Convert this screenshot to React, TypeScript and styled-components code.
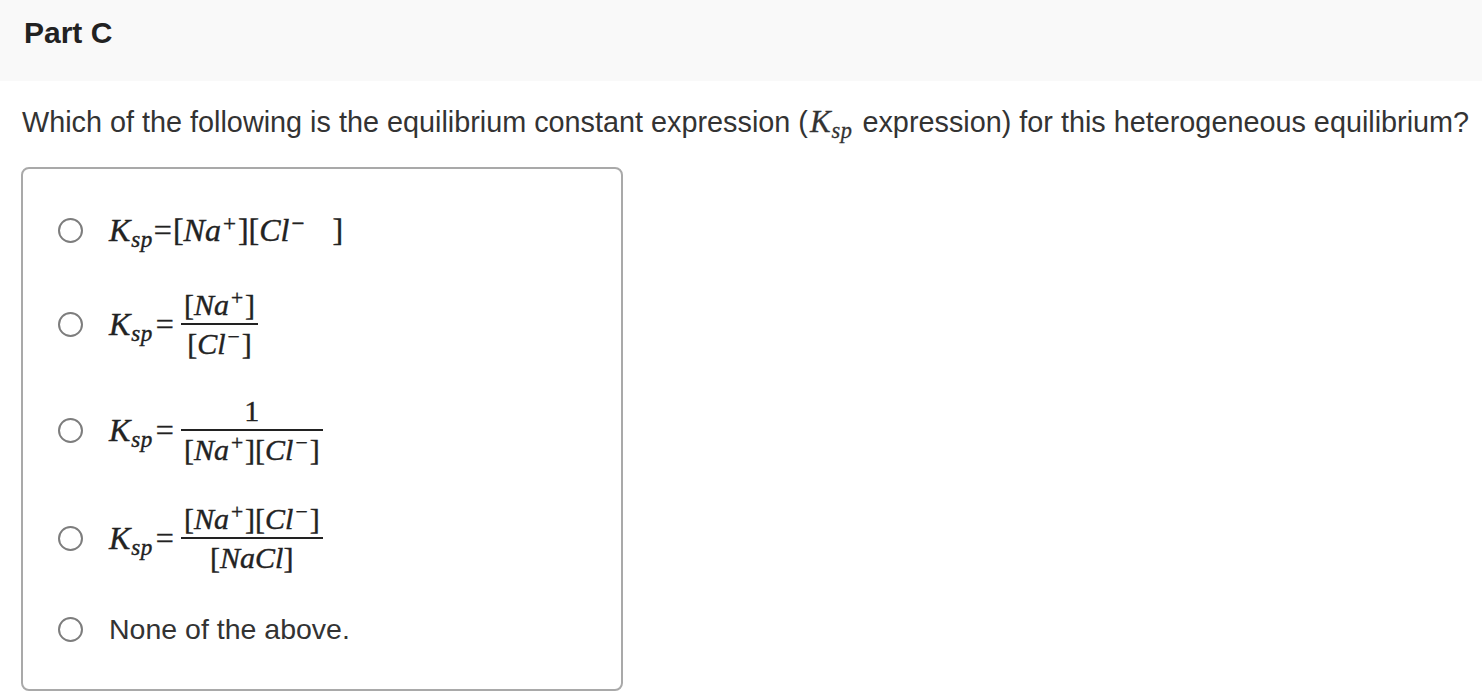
import styled, { createGlobalStyle } from 'styled-components';

const GlobalStyle = createGlobalStyle`
  body {
    margin: 0;
    background: #fff;
    font-family: "Liberation Sans", Arial, Helvetica, sans-serif;
    color: #333;
  }
`;

const Header = styled.div`
  height: 81px;
  box-sizing: border-box;
  background: #f9f9f9;
  padding: 14px 24px 0;

  h2 {
    margin: 0;
    font-size: 30px;
    line-height: 38px;
    font-weight: bold;
    color: #222;
  }
`;

const Question = styled.p`
  margin: 0;
  padding: 23px 22px 0;
  font-size: 28.8px;
  line-height: 36px;
  white-space: nowrap;
`;

const AnswerBox = styled.div`
  margin: 27px 0 0 21px;
  width: 602px;
  height: 524px;
  box-sizing: border-box;
  border: 2px solid #a9a9a9;
  border-radius: 8px;
  padding-top: 14px;
`;

const Option = styled.label<{ $h: number }>`
  display: flex;
  align-items: center;
  height: ${(p) => p.$h}px;
  padding-left: 35px;
  cursor: pointer;
`;

const Radio = styled.input.attrs({ type: 'radio', name: 'partc' })`
  appearance: none;
  margin: 0 26px 0 0;
  width: 25px;
  height: 25px;
  flex: none;
  box-sizing: border-box;
  border: 2px solid #7d7d7d;
  border-radius: 50%;
  background: #fff;
`;

const Text = styled.span`
  font-size: 28.5px;
  color: #333;
`;

const Math = styled.span`
  display: inline-flex;
  align-items: center;
  font-family: "Liberation Serif", "Times New Roman", serif;
  font-size: 32px;
  color: #222;
  white-space: nowrap;
  -webkit-text-stroke: 0.4px #222;
`;

const Run = styled.span`
  display: inline-block;
  line-height: 40px;
`;

const Mi = styled.i`
  font-style: italic;
`;

const Mo = styled.span<{ $space?: number }>`
  font-style: normal;
  margin: 0 ${(p) => p.$space ?? 0}px;
`;

const Sub = styled.sub`
  font-style: italic;
  font-size: 0.72em;
  vertical-align: -0.28em;
  line-height: 0;
  margin-left: 1px;
  letter-spacing: 0.5px;
`;

const Sup = styled.sup<{ $after?: number }>`
  font-size: 0.72em;
  vertical-align: 0.42em;
  line-height: 0;
  margin-left: 2px;
  margin-right: ${(p) => p.$after ?? 2}px;
`;

const Frac = styled.span`
  display: inline-flex;
  flex-direction: column;
  align-items: stretch;
  text-align: center;
  font-size: 30px;
  margin-left: 4px;
`;

const Num = styled.span`
  line-height: 36px;
  padding: 0 3px 0;
`;

const Den = styled.span`
  line-height: 36px;
  padding: 1px 3px 0;
  border-top: 2px solid #222;
`;

const InlineK = styled.span`
  font-family: "Liberation Serif", "Times New Roman", serif;
  font-style: italic;
  font-size: 31px;
  margin: 0 2px;
  -webkit-text-stroke: 0.3px #333;
`;

const Ksp = () => (
  <>
    <Mi>K</Mi>
    <Sub>sp</Sub>
  </>
);

const Na = () => (
  <>
    <Mo>[</Mo>
    <Mi>Na</Mi>
    <Sup>+</Sup>
    <Mo>]</Mo>
  </>
);

const Cl = ({ gap }: { gap?: number }) => (
  <>
    <Mo>[</Mo>
    <Mi>Cl</Mi>
    <Sup $after={gap}>−</Sup>
    <Mo>]</Mo>
  </>
);

const App = () => {
  return (
    <>
      <GlobalStyle />
      <Header>
        <h2>Part C</h2>
      </Header>
      <Question>
        Which of the following is the equilibrium constant expression (
        <InlineK>
          K<Sub>sp</Sub>
        </InlineK>{' '}
        expression) for this heterogeneous equilibrium?
      </Question>
      <AnswerBox>
        <Option $h={94}>
          <Radio />
          <Math>
            <Run>
              <Ksp />
              <Mo $space={1}>=</Mo>
              <Na />
              <Cl gap={28} />
            </Run>
          </Math>
        </Option>
        <Option $h={94}>
          <Radio />
          <Math>
            <Run>
              <Ksp />
              <Mo $space={3}>=</Mo>
            </Run>
            <Frac>
              <Num>
                <Na />
              </Num>
              <Den>
                <Cl />
              </Den>
            </Frac>
          </Math>
        </Option>
        <Option $h={118}>
          <Radio />
          <Math>
            <Run>
              <Ksp />
              <Mo $space={3}>=</Mo>
            </Run>
            <Frac>
              <Num>1</Num>
              <Den>
                <Na />
                <Cl />
              </Den>
            </Frac>
          </Math>
        </Option>
        <Option $h={98}>
          <Radio />
          <Math>
            <Run>
              <Ksp />
              <Mo $space={3}>=</Mo>
            </Run>
            <Frac>
              <Num>
                <Na />
                <Cl />
              </Num>
              <Den>
                <Mo>[</Mo>
                <Mi>NaCl</Mi>
                <Mo>]</Mo>
              </Den>
            </Frac>
          </Math>
        </Option>
        <Option $h={84}>
          <Radio />
          <Text>None of the above.</Text>
        </Option>
      </AnswerBox>
    </>
  );
};

export default App;
